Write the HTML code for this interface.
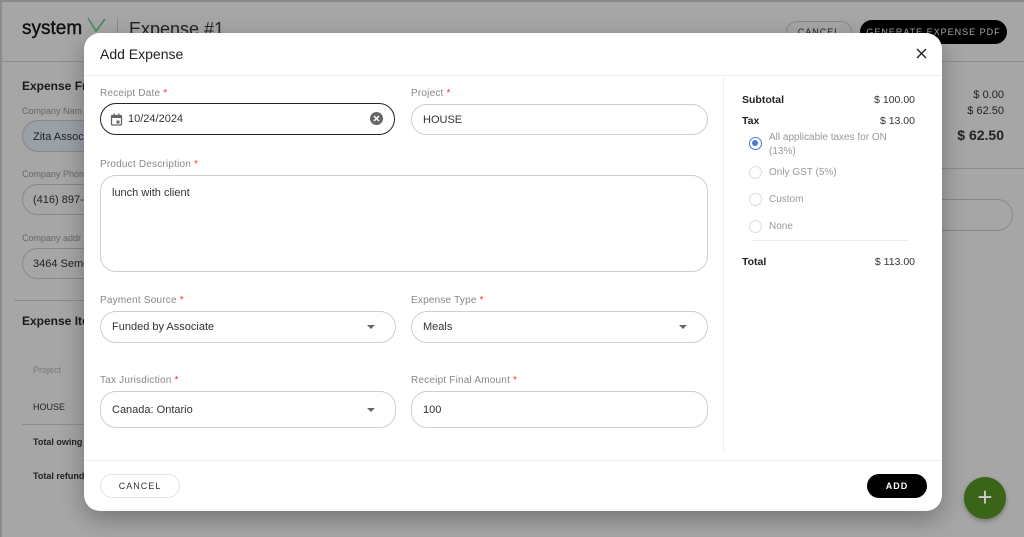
<!DOCTYPE html>
<html><head><meta charset="utf-8"><style>
*{box-sizing:border-box;margin:0;padding:0}
body{width:1024px;height:537px;overflow:hidden;font-family:"Liberation Sans",sans-serif;background:#a6a6a6;position:relative;color:#222}
.a{position:absolute}
.lbl{position:absolute;font-size:10px;color:#888;letter-spacing:.2px}
.lbl b{color:#e33;font-weight:normal}
.fld{position:absolute;border:1px solid #cfcfcf;border-radius:16px;font-size:11px;color:#333;padding-left:11px;display:flex;align-items:center}
.arr{position:absolute;right:20px;top:50%;margin-top:-2px;border-left:4px solid transparent;border-right:4px solid transparent;border-top:4px solid #666}
.rad{position:absolute;width:13px;height:13px;border:1px solid #ddd;border-radius:50%}
.rt{position:absolute;font-size:10px;color:#999}
</style></head><body>
<div class="a" style="left:0;top:0;width:1024px;height:2px;background:#8a8a8a"></div>
<div class="a" style="left:0;top:0;width:2px;height:537px;background:#8a8a8a"></div>
<div class="a" style="left:22px;top:18px;font-size:19px;color:#111;-webkit-text-stroke:0.4px #111">system</div>
<svg class="a" style="left:86px;top:16px" width="22" height="18"><path d="M2 2 L10 15 L19 3" stroke="#3f8a5a" stroke-width="1.5" fill="none"/></svg>
<div class="a" style="left:117px;top:18px;width:1px;height:24px;background:#888"></div>
<div class="a" style="left:129px;top:19px;font-size:18px;color:#222">Expense #1</div>
<div class="a" style="left:786px;top:21px;width:66px;height:22px;border:1px solid #888;border-radius:12px;font-size:9px;letter-spacing:1px;text-align:center;line-height:20px;color:#222">CANCEL</div>
<div class="a" style="left:860px;top:20px;width:147px;height:24px;background:#000;border-radius:12px;font-size:9px;letter-spacing:1px;text-align:center;line-height:24px;color:#aaa">GENERATE EXPENSE PDF</div>
<div class="a" style="left:2px;top:61px;width:1022px;height:1px;background:#8c8c8c"></div>
<div class="a" style="left:22px;top:79px;font-size:12px;font-weight:bold;color:#1a1a1a">Expense Fr</div>
<div class="a" style="left:22px;top:106px;font-size:9px;color:#666">Company Nam</div>
<div class="a" style="left:22px;top:120px;width:80px;height:32px;border:1px solid #888;border-radius:16px;background:#9aa0a8;font-size:11px;padding:10px 0 0 10px">Zita Assoc</div>
<div class="a" style="left:22px;top:169px;font-size:9px;color:#666">Company Phon</div>
<div class="a" style="left:22px;top:184px;width:80px;height:31px;border:1px solid #888;border-radius:16px;font-size:11px;padding:9px 0 0 10px">(416) 897-</div>
<div class="a" style="left:22px;top:233px;font-size:9px;color:#666">Company addr</div>
<div class="a" style="left:22px;top:248px;width:80px;height:31px;border:1px solid #888;border-radius:16px;font-size:11px;padding:9px 0 0 10px">3464 Seme</div>
<div class="a" style="left:14px;top:300px;width:80px;height:1px;background:#8c8c8c"></div>
<div class="a" style="left:22px;top:314px;font-size:12px;font-weight:bold;color:#1a1a1a">Expense Ite</div>
<div class="a" style="left:33px;top:365px;font-size:9px;color:#777">Project</div>
<div class="a" style="left:33px;top:402px;font-size:9px;color:#222">HOUSE</div>
<div class="a" style="left:22px;top:424px;width:70px;height:1px;background:#8c8c8c"></div>
<div class="a" style="left:33px;top:437px;font-size:9px;font-weight:bold;color:#222">Total owing</div>
<div class="a" style="left:33px;top:471px;font-size:9px;font-weight:bold;color:#222">Total refund</div>
<div class="a" style="left:960px;top:89px;font-size:11px;color:#222;width:44px;text-align:right">$ 0.00</div>
<div class="a" style="left:950px;top:105px;font-size:11px;color:#222;width:54px;text-align:right">$ 62.50</div>
<div class="a" style="left:940px;top:127px;font-size:14px;font-weight:bold;color:#222;width:64px;text-align:right">$ 62.50</div>
<div class="a" style="left:942px;top:168px;width:82px;height:1px;background:#8c8c8c"></div>
<div class="a" style="left:900px;top:199px;width:113px;height:32px;border:1px solid #888;border-radius:16px"></div>
<div class="a" style="left:964px;top:477px;width:42px;height:42px;border-radius:50%;background:#3a6418;box-shadow:0 2px 5px rgba(0,0,0,.3);color:#ccc;font-size:26px;text-align:center;line-height:40px">+</div>
<div class="a" style="left:84px;top:33px;width:858px;height:478px;background:#fff;border-radius:16px;box-shadow:0 8px 24px rgba(0,0,0,.3)">
<div class="a" style="left:16px;top:13px;font-size:14px;color:#222">Add Expense</div>
<svg class="a" style="left:832px;top:15px" width="11" height="11"><path d="M1 1L10 10M10 1L1 10" stroke="#222" stroke-width="1.4"/></svg>
<div class="a" style="left:0;top:42px;width:858px;height:1px;background:#eee"></div>
<div class="a" style="left:639px;top:45px;width:1px;height:373px;background:#eee"></div>
<div class="a" style="left:0;top:427px;width:858px;height:1px;background:#eee"></div>

<div class="lbl" style="left:16px;top:55px">Receipt Date <b>*</b></div>
<div class="fld" style="left:16px;top:70px;width:295px;height:32px;border:1.5px solid #222;padding-left:9px">
<svg width="13" height="13" style="margin-right:5px"><rect x="1.5" y="2.5" width="10" height="9.5" rx="1" fill="none" stroke="#666" stroke-width="1.3"/><rect x="1.5" y="2.5" width="10" height="2.5" fill="#666"/><rect x="6.5" y="7.5" width="3" height="3" fill="#666"/><rect x="3.5" y="0.5" width="1.3" height="3" fill="#666"/><rect x="8.2" y="0.5" width="1.3" height="3" fill="#666"/></svg>10/24/2024
<svg class="a" style="right:11px;top:8px" width="13" height="13"><circle cx="6.5" cy="6.5" r="6.5" fill="#666"/><path d="M4 4L9 9M9 4L4 9" stroke="#fff" stroke-width="1.5"/></svg></div>
<div class="lbl" style="left:327px;top:55px">Project <b>*</b></div>
<div class="fld" style="left:327px;top:71px;width:297px;height:31px">HOUSE</div>

<div class="lbl" style="left:16px;top:126px">Product Description <b>*</b></div>
<div class="fld" style="left:16px;top:142px;width:608px;height:97px;align-items:flex-start;padding-top:11px">lunch with client</div>

<div class="lbl" style="left:16px;top:262px">Payment Source <b>*</b></div>
<div class="fld" style="left:16px;top:278px;width:296px;height:32px">Funded by Associate<span class="arr"></span></div>
<div class="lbl" style="left:327px;top:262px">Expense Type <b>*</b></div>
<div class="fld" style="left:327px;top:278px;width:297px;height:32px">Meals<span class="arr"></span></div>

<div class="lbl" style="left:16px;top:342px">Tax Jurisdiction <b>*</b></div>
<div class="fld" style="left:16px;top:358px;width:296px;height:37px">Canada: Ontario<span class="arr"></span></div>
<div class="lbl" style="left:327px;top:342px">Receipt Final Amount <b>*</b></div>
<div class="fld" style="left:327px;top:358px;width:297px;height:37px">100</div>

<div class="a" style="left:658px;top:61px;font-size:10.5px;font-weight:bold">Subtotal</div>
<div class="a" style="left:750px;top:61px;width:81px;text-align:right;font-size:10.5px;color:#333">$ 100.00</div>
<div class="a" style="left:658px;top:82px;font-size:10.5px;font-weight:bold">Tax</div>
<div class="a" style="left:750px;top:82px;width:81px;text-align:right;font-size:10.5px;color:#333">$ 13.00</div>
<div class="rad" style="left:665px;top:104px;border:1.5px solid #4a78d8"><div style="margin:2px;width:6px;height:6px;border-radius:50%;background:#4a78d8"></div></div>
<div class="rt" style="left:685px;top:98px;line-height:14px">All applicable taxes for ON<br>(13%)</div>
<div class="rad" style="left:665px;top:133px"></div><div class="rt" style="left:685px;top:134px">Only GST (5%)</div>
<div class="rad" style="left:665px;top:160px"></div><div class="rt" style="left:685px;top:161px">Custom</div>
<div class="rad" style="left:665px;top:187px"></div><div class="rt" style="left:685px;top:188px">None</div>
<div class="a" style="left:667px;top:207px;width:157px;height:1px;background:#eee"></div>
<div class="a" style="left:658px;top:223px;font-size:10.5px;font-weight:bold">Total</div>
<div class="a" style="left:750px;top:223px;width:81px;text-align:right;font-size:10.5px;color:#333">$ 113.00</div>

<div class="a" style="left:16px;top:441px;width:80px;height:24px;border:1px solid #e4e4e4;border-radius:12px;font-size:9px;letter-spacing:1px;text-align:center;line-height:22px;color:#333">CANCEL</div>
<div class="a" style="left:783px;top:441px;width:60px;height:24px;background:#000;border-radius:12px;font-size:9px;letter-spacing:1px;text-align:center;line-height:24px;color:#fff;font-weight:bold">ADD</div>
</div>
</body></html>
